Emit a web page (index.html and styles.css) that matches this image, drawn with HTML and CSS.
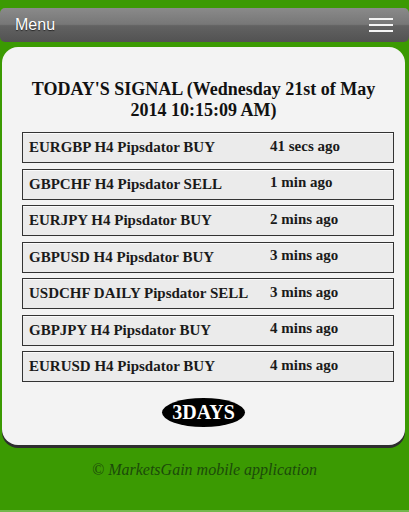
FILE: index.html
```html
<!DOCTYPE html>
<html lang="en">

<head>
  <meta charset="UTF-8">
  <meta name="viewport" content="width=device-width, initial-scale=1.0">
  <title>MarketsGain Signals</title>
  <link rel="stylesheet" href="styles.css">
</head>

<body>
  <header class="topbar">
    <span class="topbar-title">Menu</span>
    <span class="hamburger"><i></i><i></i><i></i></span>
  </header>

  <div class="card">
    <h1 class="signal-title">TODAY'S SIGNAL (Wednesday 21st of May 2014 10:15:09 AM)</h1>

    <ul class="signals">
      <li><span class="name">EURGBP H4 Pipsdator BUY</span><span class="ago">41 secs ago</span></li>
      <li><span class="name">GBPCHF H4 Pipsdator SELL</span><span class="ago">1 min ago</span></li>
      <li><span class="name">EURJPY H4 Pipsdator BUY</span><span class="ago">2 mins ago</span></li>
      <li><span class="name">GBPUSD H4 Pipsdator BUY</span><span class="ago">3 mins ago</span></li>
      <li><span class="name">USDCHF DAILY Pipsdator SELL</span><span class="ago">3 mins ago</span></li>
      <li><span class="name">GBPJPY H4 Pipsdator BUY</span><span class="ago">4 mins ago</span></li>
      <li><span class="name">EURUSD H4 Pipsdator BUY</span><span class="ago">4 mins ago</span></li>
    </ul>

    <div class="more">
      <span class="pill">3DAYS</span>
    </div>
  </div>

  <footer class="footer">© MarketsGain mobile application</footer>
</body>

</html>
```

FILE: styles.css
```css
* {
  box-sizing: border-box;
}
body {
  margin: 0;
  padding: 8px 0 0;
  height: 512px;
  overflow: hidden;
  background-color: #3b9a02;
  border-bottom: 2px solid #72b84c;
  font-family: 'Liberation Serif', 'Times New Roman', serif;
}
.topbar {
  height: 34px;
  display: flex;
  align-items: center;
  justify-content: space-between;
  padding: 0 16px 0 15px;
  border-radius: 5px;
  background-image: linear-gradient(#8a8a8a, #777777 48%, #626262 52%, #525252);
}
.topbar-title {
  font-family: 'Liberation Sans', Arial, sans-serif;
  font-size: 16px;
  color: #ffffff;
  text-shadow: 0 1px 1px #222;
}
.hamburger {
  display: flex;
  flex-direction: column;
  gap: 4px;
  width: 24px;
}
.hamburger i {
  display: block;
  height: 2px;
  background-color: #f4f4f4;
}
.card {
  margin: 5px 4px 0 2px;
  height: 398px;
  padding-top: 32px;
  background-color: #f3f3f3;
  border-radius: 16px;
  box-shadow: 0 3px 0 #2e2e2e;
}
.signal-title {
  margin: 0;
  padding: 0 20px;
  text-align: center;
  font-size: 18px;
  line-height: 21px;
  font-weight: bold;
  color: #111;
}
.signals {
  list-style: none;
  margin: 11px 11px 0 20px;
  padding: 0;
  display: flex;
  flex-direction: column;
  gap: 5.5px;
}
.signals li {
  height: 31px;
  display: grid;
  grid-template-columns: 241px 1fr;
  align-items: center;
  padding: 0 0 0 6px;
  background-color: #ebebeb;
  border: 1px solid #333;
  box-shadow: inset 0 1px 0 #fafafa;
  font-size: 15px;
  font-weight: bold;
  color: #1a1a1a;
}
.signals .ago {
  margin-top: -3px;
}
.more {
  display: flex;
  justify-content: center;
  margin-top: 16px;
}
.pill {
  width: 83px;
  height: 29px;
  display: flex;
  align-items: center;
  justify-content: center;
  border-radius: 50%;
  background-color: #000;
  color: #fff;
  font-size: 20px;
  font-weight: bold;
}
.footer {
  margin-top: 16px;
  text-align: center;
  font-style: italic;
  font-size: 16px;
  color: #1c4a0a;
}
```
